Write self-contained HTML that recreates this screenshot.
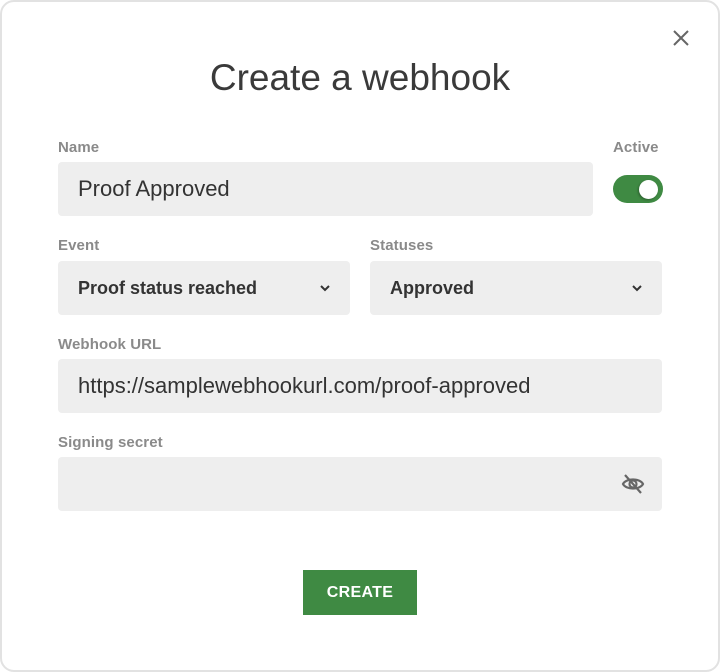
<!DOCTYPE html>
<html><head><style>
body{margin:0;width:720px;height:672px;background:#fff;font-family:"Liberation Sans",sans-serif;overflow:hidden}
.m{position:absolute;left:0;top:0;width:716px;height:668px;border:2px solid #e2e2e2;border-radius:14px;background:#fff}
.a{position:absolute}
.lbl{position:absolute;font-size:15px;color:#8a8a8a;font-weight:bold;letter-spacing:0.1px}
.in{position:absolute;background:#eeeeee;border-radius:4px;height:54px;box-sizing:border-box;padding-left:20px;line-height:54px;font-size:22px;color:#333}
.sel{font-weight:bold;font-size:18px}
.chev{position:absolute;right:18px;top:20px}
</style></head><body>
<div class="m"></div>
<svg class="a" style="left:672px;top:29px" width="18" height="18" viewBox="0 0 18 18"><path d="M2 2L16 16M16 2L2 16" stroke="#666" stroke-width="2"/></svg>
<div class="a" style="left:0;width:720px;top:57px;text-align:center;font-size:37px;color:#3a3a3a">Create a webhook</div>
<div class="lbl" style="left:58px;top:139px">Name</div>
<div class="lbl" style="left:613px;top:139px">Active</div>
<div class="in" style="left:58px;top:162px;width:535px">Proof Approved</div>
<div class="a" style="left:613px;top:175px;width:50px;height:28px;border-radius:14px;background:#3f8a43"></div>
<div class="a" style="left:639px;top:180px;width:19px;height:19px;border-radius:50%;background:#fff;box-shadow:-1px 1px 2px rgba(0,0,0,.3)"></div>
<div class="lbl" style="left:58px;top:237px">Event</div>
<div class="lbl" style="left:370px;top:237px">Statuses</div>
<div class="in sel" style="left:58px;top:261px;width:292px">Proof status reached<svg class="chev" width="14" height="14" viewBox="0 0 14 14"><path d="M3 5L7 9L11 5" stroke="#333" stroke-width="2" fill="none"/></svg></div>
<div class="in sel" style="left:370px;top:261px;width:292px">Approved<svg class="chev" width="14" height="14" viewBox="0 0 14 14"><path d="M3 5L7 9L11 5" stroke="#333" stroke-width="2" fill="none"/></svg></div>
<div class="lbl" style="left:58px;top:336px">Webhook URL</div>
<div class="in" style="left:58px;top:359px;width:604px">https://samplewebhookurl.com/proof-approved</div>
<div class="lbl" style="left:58px;top:434px">Signing secret</div>
<div class="in" style="left:58px;top:457px;width:604px"><svg class="a" style="left:563px;top:16px" width="24" height="22" viewBox="0 0 24 22"><path d="M2 11C5 5 19 5 22 11C19 17 5 17 2 11Z" stroke="#666" stroke-width="2.2" fill="none"/><circle cx="12" cy="11" r="3.5" stroke="#666" stroke-width="2.2" fill="none"/><path d="M4 2L20 20" stroke="#666" stroke-width="2.2"/></svg></div>
<div class="a" style="left:303px;top:570px;width:114px;height:45px;background:#3f8a43;color:#fff;font-weight:bold;font-size:16px;line-height:45px;text-align:center;letter-spacing:0.3px">CREATE</div>
</body></html>
